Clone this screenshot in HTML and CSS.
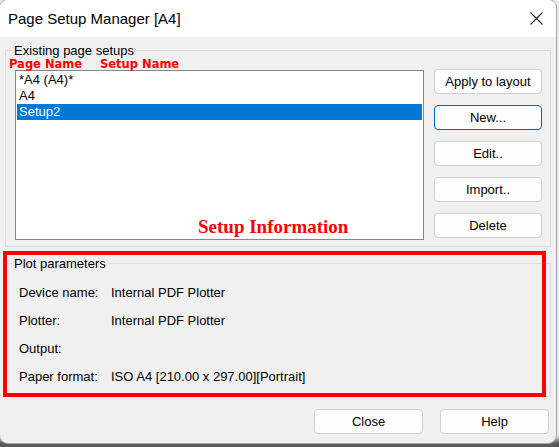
FILE: index.html
```html
<!DOCTYPE html>
<html>
<head>
<meta charset="utf-8">
<link rel="stylesheet" href="styles.css">
</head>
<body>
<div class="window">
  <div class="titlebar">
    <span class="title">Page Setup Manager [A4]</span>
    <svg class="close-icon" width="13" height="13" viewBox="0 0 13 13"><path d="M0.5 0.5 L12.5 12.5 M12.5 0.5 L0.5 12.5" stroke="#1a1a1a" stroke-width="1.1" fill="none"/></svg>
  </div>
  <div class="content">
    <fieldset class="group">
      <legend>Existing page setups</legend>
      <div class="setups-row">
        <div class="listbox">
          <div class="item">*A4 (A4)*</div>
          <div class="item">A4</div>
          <div class="item selected">Setup2</div>
        </div>
        <div class="side-buttons">
          <button class="btn">Apply to layout</button>
          <button class="btn focused">New...</button>
          <button class="btn">Edit..</button>
          <button class="btn">Import..</button>
          <button class="btn">Delete</button>
        </div>
      </div>
      <span class="note note-page">Page Name</span>
      <span class="note note-setup">Setup Name</span>
      <span class="note-info">Setup Information</span>
    </fieldset>
    <fieldset class="group group-plot">
      <legend>Plot parameters</legend>
      <div class="params">
        <div class="param"><span class="label">Device name:</span><span class="value">Internal PDF Plotter</span></div>
        <div class="param"><span class="label">Plotter:</span><span class="value">Internal PDF Plotter</span></div>
        <div class="param"><span class="label">Output:</span><span class="value"></span></div>
        <div class="param"><span class="label">Paper format:</span><span class="value">ISO A4 [210.00 x 297.00][Portrait]</span></div>
      </div>
    </fieldset>
    <div class="footer">
      <button class="btn footer-btn">Close</button>
      <button class="btn footer-btn">Help</button>
    </div>
  </div>
  <div class="highlight-box"></div>
</div>
</body>
</html>
```
FILE: styles.css
```css
html, body {
  margin: 0;
  padding: 0;
}
body {
  width: 559px;
  height: 447px;
  background: linear-gradient(to bottom, #e9e9e9 0, #e9e9e9 436px, #5a5a5a 443px, #5a5a5a 447px);
  font-family: "Liberation Sans", Arial, sans-serif;
  font-size: 13px;
  color: #000;
  overflow: hidden;
}
.window {
  position: relative;
  width: 556px;
  height: 443px;
  background: #f0f0f0;
  border-radius: 8px;
  box-shadow: 0 0 0 1px #a9a9a9;
  overflow: hidden;
}
.titlebar {
  height: 37px;
  background: #ffffff;
  display: flex;
  align-items: center;
  justify-content: space-between;
  padding: 0 13px 0 8px;
  box-sizing: border-box;
}
.title {
  font-size: 15px;
  line-height: 18px;
  color: #000;
  margin-top: 1px;
}
.close-icon {
  display: block;
}
.content {
  padding: 6px 5px 0 5px;
}
.group {
  margin: 0;
  padding: 12px 8px 6px 9px;
  border: 1px solid #dcdcdc;
  min-width: 0;
  position: relative;
}
.group legend {
  margin-left: -3px;
  padding: 0 2px;
  line-height: 15px;
  font-size: 13px;
}
.setups-row {
  display: flex;
  gap: 10px;
}
.listbox {
  flex: 1;
  height: 170px;
  box-sizing: border-box;
  background: #fff;
  border: 1px solid #828790;
  padding: 1px 1px;
}
.item {
  height: 16px;
  line-height: 16px;
  padding-left: 2px;
}
.item.selected {
  background: #0078d7;
  color: #fff;
}
.side-buttons {
  width: 108px;
  display: flex;
  flex-direction: column;
  gap: 11px;
  margin-top: -1px;
}
.btn {
  height: 25px;
  box-sizing: border-box;
  background: #fdfdfd;
  border: 1px solid #d0d0d0;
  border-radius: 4px;
  font-family: "Liberation Sans", Arial, sans-serif;
  font-size: 13px;
  color: #000;
  padding: 0;
  margin: 0;
}
.btn.focused {
  border-color: #0067c0;
}
.note {
  position: absolute;
  top: 1px;
  font-family: "DejaVu Sans", sans-serif;
  font-weight: bold;
  font-size: 11.5px;
  color: #ff0000;
  line-height: 10px;
}
.note-page { left: 3px; }
.note-setup { left: 94px; }
.note-info {
  position: absolute;
  left: 192px;
  top: 159px;
  font-family: "Liberation Serif", "Times New Roman", serif;
  font-weight: bold;
  font-size: 19px;
  color: #ff0000;
  line-height: 20px;
}
.group-plot {
  margin-top: 9px;
  padding: 8px 8px 5px 13px;
}
.group-plot legend {
  margin-left: -7px;
}
.params {
  display: flex;
  flex-direction: column;
}
.param {
  display: flex;
  height: 28px;
  line-height: 28px;
}
.label {
  width: 92px;
}
.footer {
  display: flex;
  justify-content: flex-end;
  gap: 17px;
  margin-top: 12px;
  padding-right: 2px;
}
.footer-btn {
  width: 109px;
}
.highlight-box {
  position: absolute;
  left: 3px;
  top: 251px;
  width: 543px;
  height: 146px;
  box-sizing: border-box;
  border: 4px solid #ff0000;
  pointer-events: none;
}
```
